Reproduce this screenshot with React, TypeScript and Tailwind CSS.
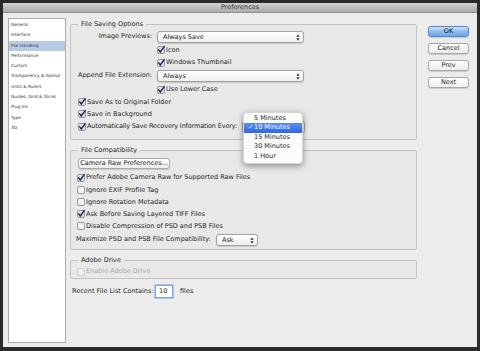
import React from "react";

const sidebarItems = [
  "General",
  "Interface",
  "File Handling",
  "Performance",
  "Cursors",
  "Transparency & Gamut",
  "Units & Rulers",
  "Guides, Grid & Slices",
  "Plug-Ins",
  "Type",
  "3D",
];

const intervals = ["5 Minutes", "10 Minutes", "15 Minutes", "30 Minutes", "1 Hour"];

function Arrows() {
  return (
    <svg width="4" height="7" viewBox="0 0 4 7" className="ml-auto mr-[3px] shrink-0">
      <path d="M0.3 2.8 L2 0.5 L3.7 2.8 Z M0.3 4.2 L2 6.5 L3.7 4.2 Z" fill="#2b2b2b" />
    </svg>
  );
}

function Select({ value, className = "" }: { value: string; className?: string }) {
  return (
    <div
      className={`flex items-center h-[12px] pl-[5px] rounded-[3px] border border-[#a3a3a3] bg-linear-to-b from-white to-[#ededed] shadow-[0_0.5px_1px_rgba(0,0,0,0.15)] ${className}`}
    >
      {value && <span className="leading-none whitespace-nowrap">{value}</span>}
      <Arrows />
    </div>
  );
}

function Check({ checked = false, disabled = false }: { checked?: boolean; disabled?: boolean }) {
  return (
    <svg width="8" height="8" viewBox="0 0 8 8" className="shrink-0 overflow-visible">
      <rect
        x="0.5"
        y="0.5"
        width="7"
        height="7"
        rx="1.5"
        fill={checked ? "#d9e4f3" : disabled ? "#eeeeee" : "#f4f4f4"}
        stroke={disabled ? "#d0d0d0" : "#999999"}
      />
      {checked && (
        <path d="M1.7 3.9 L3.3 5.9 L7.2 0.6" stroke="#1d2a4c" strokeWidth="1.5" fill="none" strokeLinecap="round" />
      )}
    </svg>
  );
}

function CheckRow({
  label,
  checked,
  disabled,
  className = "",
}: {
  label: string;
  checked?: boolean;
  disabled?: boolean;
  className?: string;
}) {
  return (
    <div className={`flex items-center ${className}`}>
      <Check checked={checked} disabled={disabled} />
      <span className={`ml-[1px] leading-none whitespace-nowrap ${disabled ? "text-[#a9a9a9]" : ""}`}>{label}</span>
    </div>
  );
}

function Group({ title, children, className = "" }: { title: string; children: React.ReactNode; className?: string }) {
  return (
    <fieldset className={`border border-[#c3c3c3] rounded-[2px] bg-[#e8e8e8] ${className}`}>
      <legend className="ml-[7px] px-[3px] h-[12px] leading-[12px]">{title}</legend>
      {children}
    </fieldset>
  );
}

function MacButton({ label, primary }: { label: string; primary?: boolean }) {
  return (
    <button
      className={`h-[11px] w-full rounded-[3px] border text-[6.5px] leading-none ${
        primary
          ? "border-[#5d87bd] bg-linear-to-b from-[#cfe3fb] via-[#8dbdf0] to-[#6aa7ea] text-[#111]"
          : "border-[#a9a9a9] bg-linear-to-b from-white to-[#ececec] text-[#1e1e1e]"
      } shadow-[0_0.5px_1px_rgba(0,0,0,0.15)]`}
    >
      {label}
    </button>
  );
}

export default function App() {
  return (
    <div className="w-[480px] h-[351px] bg-[#2a2a2a] p-[3px] pb-[4px] font-['DejaVu_Sans',sans-serif] text-[6.5px] text-[#1e1e1e]">
      <div className="flex flex-col h-full bg-[#ececec]">
        {/* title bar */}
        <div className="h-[10px] flex items-center justify-center bg-linear-to-b from-[#d2d2d2] to-[#ababab] border-b border-[#8f8f8f] text-[#333]">
          Preferences
        </div>

        <div className="flex flex-1 min-h-0 px-[5px] pt-[5px] pb-[4px]">
          {/* sidebar */}
          <div className="w-[58px] bg-white border border-[#acacac] pt-[1px] text-[4.3px] text-[#333]">
            {sidebarItems.map((item) => (
              <div
                key={item}
                className={`h-[10.3px] leading-[10.3px] pl-[2px] whitespace-nowrap ${
                  item === "File Handling" ? "bg-[#b7cbe6]" : ""
                }`}
              >
                {item}
              </div>
            ))}
          </div>

          {/* main panel */}
          <div className="ml-[4px] w-[347px] flex flex-col">
            <Group title="File Saving Options">
              <div className="flex items-center h-[14px]">
                <span className="w-[81px] text-right whitespace-nowrap">Image Previews:</span>
                <Select value="Always Save" className="ml-[5px] w-[147px]" />
              </div>
              <CheckRow label="Icon" checked className="h-[12px] pl-[86px]" />
              <CheckRow label="Windows Thumbnail" checked className="h-[13px] pl-[86px]" />
              <div className="flex items-center h-[14px]">
                <span className="w-[81px] text-right whitespace-nowrap">Append File Extension:</span>
                <Select value="Always" className="ml-[5px] w-[147px]" />
              </div>
              <CheckRow label="Use Lower Case" checked className="h-[13px] pl-[86px]" />
              <CheckRow label="Save As to Original Folder" checked className="h-[12px] pl-[7px]" />
              <CheckRow label="Save in Background" checked className="h-[12px] pl-[7px]" />
              <div className="flex items-center h-[13px] pl-[7px]">
                <Check checked />
                <span className="ml-[1px] leading-none w-[153px] whitespace-nowrap tracking-[-0.15px]">
                  Automatically Save Recovery Information Every:
                </span>
                <div className="relative ml-[2px]">
                  {/* the select's own label is hidden under the open menu */}
                  <Select value="" className="w-[63px]" />
                  <div className="absolute left-[1px] top-[-9px] w-[60px] rounded-[4px] bg-[#fbfbfb] pt-[1px] pb-[2px] shadow-[0_2px_6px_rgba(0,0,0,0.4)] border border-[#d6d6d6]">
                    {intervals.map((t) => (
                      <div
                        key={t}
                        className={`flex h-[9.5px] leading-[9.5px] pl-[4px] whitespace-nowrap ${
                          t === "10 Minutes" ? "bg-linear-to-b from-[#5a8ff0] to-[#2e67df] text-white" : ""
                        }`}
                      >
                        <span className="w-[6px]">{t === "10 Minutes" ? "✓" : ""}</span>
                        <span>{t}</span>
                      </div>
                    ))}
                  </div>
                </div>
              </div>
              <div className="h-[6px]" />
            </Group>

            <Group title="File Compatibility" className="mt-[4px]">
              <div className="flex items-center h-[15px] pl-[7px]">
                <button className="h-[11px] w-[92px] rounded-[3px] border border-[#a9a9a9] bg-linear-to-b from-white to-[#ececec] leading-none whitespace-nowrap shadow-[0_0.5px_1px_rgba(0,0,0,0.15)]">
                  Camera Raw Preferences...
                </button>
              </div>
              <CheckRow label="Prefer Adobe Camera Raw for Supported Raw Files" checked className="h-[13px] pl-[6px]" />
              <CheckRow label="Ignore EXIF Profile Tag" className="h-[12px] pl-[6px]" />
              <CheckRow label="Ignore Rotation Metadata" className="h-[12px] pl-[6px]" />
              <CheckRow label="Ask Before Saving Layered TIFF Files" checked className="h-[12px] pl-[6px]" />
              <CheckRow label="Disable Compression of PSD and PSB Files" className="h-[12px] pl-[6px]" />
              <div className="flex items-center h-[16px] pl-[5px]">
                <span className="w-[140px] whitespace-nowrap">Maximize PSD and PSB File Compatibility:</span>
                <Select value="Ask" className="w-[42px]" />
              </div>
              <div className="h-[1px]" />
            </Group>

            <Group title="Adobe Drive" className="mt-[4px]">
              <CheckRow label="Enable Adobe Drive" disabled className="h-[11px] pl-[6px]" />
              <div className="h-[1px]" />
            </Group>

            <div className="flex items-center h-[15px] mt-[5px] pl-[2px]">
              <span className="w-[83px] whitespace-nowrap">Recent File List Contains:</span>
              <div className="w-[18px] h-[13px] flex items-center pl-[3px] bg-white border border-[#7ea6dc] shadow-[0_0_0_1px_#a9c6ec]">
                10
              </div>
              <span className="ml-[7px]">files</span>
            </div>
          </div>

          {/* dialog buttons */}
          <div className="ml-[11px] w-[41px] pt-[8px] flex flex-col gap-[6px]">
            <MacButton label="OK" primary />
            <MacButton label="Cancel" />
            <MacButton label="Prev" />
            <MacButton label="Next" />
          </div>
        </div>
      </div>
    </div>
  );
}
